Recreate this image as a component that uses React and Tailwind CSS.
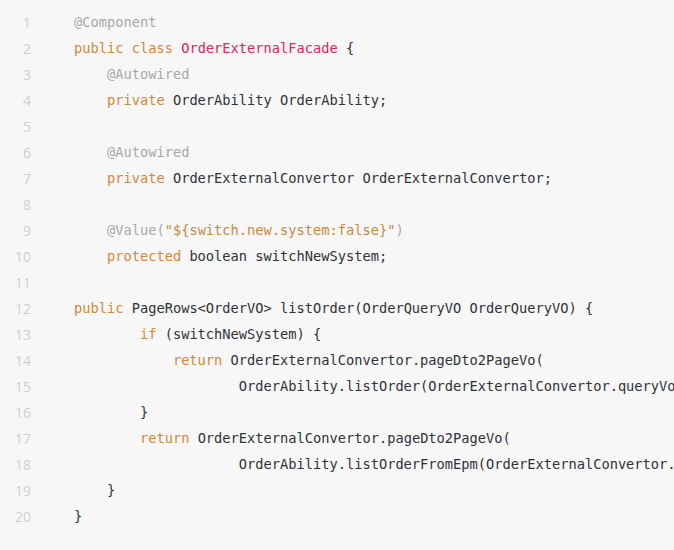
import React from "react";

const K = ({ children }) => <span className="text-[#d4873a]">{children}</span>;
const A = ({ children }) => <span className="text-[#a8a8a8]">{children}</span>;
const C = ({ children }) => <span className="text-[#e8235a]">{children}</span>;
const S = ({ children }) => <span className="text-[#c98a3f]">{children}</span>;

const lines = [
  <A>@Component</A>,
  <><K>public</K> <K>class</K> <C>OrderExternalFacade</C> {"{"}</>,
  <>{"    "}<A>@Autowired</A></>,
  <>{"    "}<K>private</K> OrderAbility OrderAbility;</>,
  <></>,
  <>{"    "}<A>@Autowired</A></>,
  <>{"    "}<K>private</K> OrderExternalConvertor OrderExternalConvertor;</>,
  <></>,
  <>{"    "}<A>@Value(</A><S>"${"{"}switch.new.system:false{"}"}"</S><A>)</A></>,
  <>{"    "}<K>protected</K> boolean switchNewSystem;</>,
  <></>,
  <><K>public</K> PageRows&lt;OrderVO&gt; listOrder(OrderQueryVO OrderQueryVO) {"{"}</>,
  <>{"        "}<K>if</K> (switchNewSystem) {"{"}</>,
  <>{"            "}<K>return</K> OrderExternalConvertor.pageDto2PageVo(</>,
  <>{"                    "}OrderAbility.listOrder(OrderExternalConvertor.queryVo2Dto(OrderQueryVO)));</>,
  <>{"        "}{"}"}</>,
  <>{"        "}<K>return</K> OrderExternalConvertor.pageDto2PageVo(</>,
  <>{"                    "}OrderAbility.listOrderFromEpm(OrderExternalConvertor.queryVo2Dto(OrderQueryVO)));</>,
  <>{"    "}{"}"}</>,
  <>{"}"}</>,
];

export default function App() {
  return (
    <div className="w-[674px] h-[550px] overflow-hidden bg-[#f7f7f7] pt-[9px]">
      {lines.map((l, i) => (
        <div key={i} className="flex h-[26px] items-center">
          <div className="w-[31px] shrink-0 text-right text-[14px] text-[#cfcfcf] font-['Open_Sans',sans-serif]">
            {i + 1}
          </div>
          <div className="ml-[43px] whitespace-pre text-[13.7px] text-[#2f3337] font-['DejaVu_Sans_Mono',monospace]">
            {l}
          </div>
        </div>
      ))}
    </div>
  );
}
